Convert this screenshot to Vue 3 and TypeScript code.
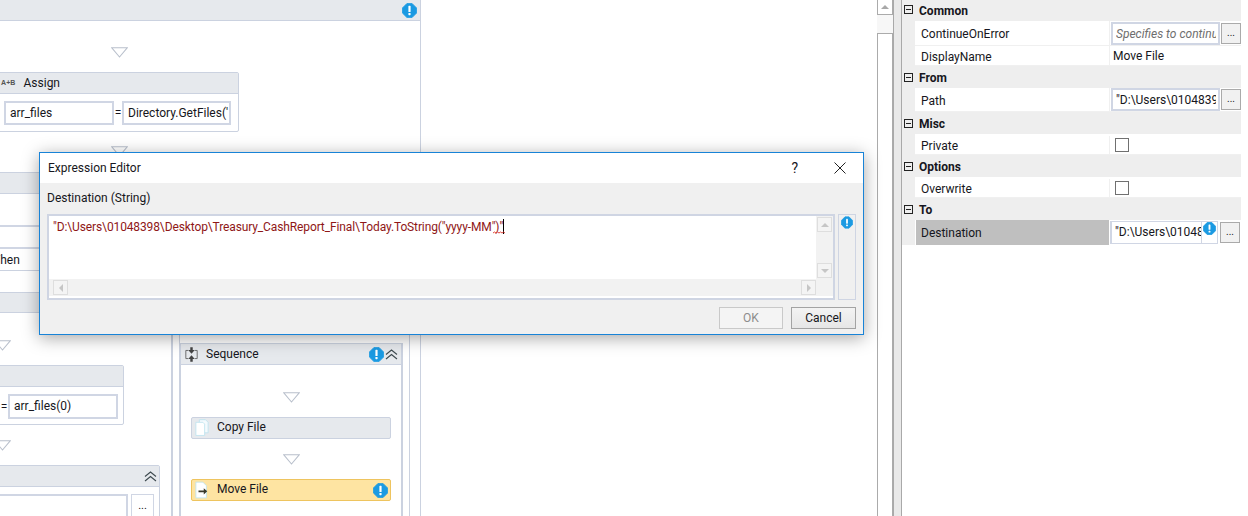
<script setup lang="ts">
interface Row {
  label: string
  h: number
  kind: 'input' | 'text' | 'check' | 'warn'
  value?: string
  placeholder?: boolean
}
interface Group {
  title: string
  h: number
  rows: Row[]
}
const groups: Group[] = [
  {
    title: 'Common',
    h: 21,
    rows: [
      { label: 'ContinueOnError', h: 25, kind: 'input', value: 'Specifies to continu', placeholder: true },
      { label: 'DisplayName', h: 20, kind: 'text', value: 'Move File' }
    ]
  },
  { title: 'From', h: 22, rows: [{ label: 'Path', h: 24, kind: 'input', value: '"D:\\Users\\0104839' }] },
  { title: 'Misc', h: 22, rows: [{ label: 'Private', h: 21, kind: 'check' }] },
  { title: 'Options', h: 22, rows: [{ label: 'Overwrite', h: 21, kind: 'check' }] },
  { title: 'To', h: 22, rows: [{ label: 'Destination', h: 25, kind: 'warn', value: '"D:\\Users\\01048' }] }
]
const expression = '"D:\\Users\\01048398\\Desktop\\Treasury_CashReport_Final\\Today.ToString("yyyy-MM")"'
</script>

<template>
  <div class="app">
    <svg class="defs" width="0" height="0" aria-hidden="true">
      <symbol id="info" viewBox="0 0 15 15">
        <path d="M5 .4h5L14.6 5v5L10 14.600H5L.4 10V5z" fill="#1b9ae2" stroke="#1b9ae2" stroke-width=".8" stroke-linejoin="round" />
        <rect x="6.400" y="2.800" width="2.200" height="6.200" rx=".6" fill="#fff" />
        <rect x="6.400" y="10" width="2.200" height="2.200" rx=".6" fill="#fff" />
      </symbol>
      <symbol id="tri" viewBox="0 0 17 11">
        <path d="M.8.8h15.400L8.500 10z" fill="#fff" stroke="#b9c0cc" stroke-width="1.100" />
      </symbol>
      <symbol id="chev" viewBox="0 0 13 11">
        <path d="M1 5.500 6.500 1 12 5.500M1 10 6.500 5.500 12 10" fill="none" stroke="#3e4a4f" stroke-width="1.100" />
      </symbol>
    </svg>

    <main class="canvas">
      <section class="outer">
        <header class="outer-head">
          <svg class="ic outer-ic"><use href="#info" /></svg>
        </header>
      </section>

      <svg class="tri t1"><use href="#tri" /></svg>
      <article class="card assign">
        <header class="card-head">
          <span class="ab">A+B</span>
          <span>Assign</span>
        </header>
        <div class="assign-body">
          <span class="field f-to">arr_files</span>
          <span class="eq">=</span>
          <span class="field f-val">Directory.GetFiles('</span>
        </div>
      </article>
      <svg class="tri t2"><use href="#tri" /></svg>

      <article class="card hidden-card">
        <header class="card-head"></header>
        <div class="hidden-field"></div>
        <div class="then-row">Then</div>
      </article>
      <div class="band"></div>
      <svg class="tri t3"><use href="#tri" /></svg>

      <article class="card assign2">
        <header class="card-head"></header>
        <div class="assign2-body">
          <span class="eq">=</span>
          <span class="field f-val2">arr_files(0)</span>
        </div>
      </article>
      <svg class="tri t4"><use href="#tri" /></svg>

      <article class="card last">
        <header class="card-head last-head">
          <svg class="chev"><use href="#chev" /></svg>
        </header>
        <div class="last-body">
          <span class="field f-last"></span>
          <span class="dots">...</span>
        </div>
      </article>

      <div class="vline v1"></div>
      <div class="vline v2"></div>
      <div class="vline v3"></div>

      <section class="sequence">
        <header class="seq-head">
          <svg class="seq-ic" viewBox="0 0 16 18">
            <path d="M4 4H1v10h3M12 4h3v10h-3" fill="none" stroke="#555" stroke-width="1" />
            <path d="M6.500 0h3v3.500H12L8 8 4 3.500h2.500zM6.500 18v-3.500H4L8 10l4 4.500H9.500V18z" fill="#444" />
          </svg>
          <span class="seq-title">Sequence</span>
          <svg class="ic"><use href="#info" /></svg>
          <svg class="chev"><use href="#chev" /></svg>
        </header>
        <div class="seq-body">
          <svg class="tri-flow tri-first"><use href="#tri" /></svg>
          <div class="act">
            <svg class="act-ic" viewBox="0 0 16 20">
              <path d="M5 .5h7l3 3v12H5z" fill="#f4fafd" stroke="#bfe3ef" />
              <path d="M1 3.500h8l2 2v13H1z" fill="#fff" stroke="#bfe3ef" />
            </svg>
            <span>Copy File</span>
          </div>
          <svg class="tri-flow tri-next"><use href="#tri" /></svg>
          <div class="act act-sel">
            <svg class="act-ic" viewBox="0 0 16 20">
              <path d="M1 1h8l4 4v14H1z" fill="#fff" stroke="#bfe3ef" />
              <path d="M4 10.500h6V8l4 3.500-4 3.500v-2.500H4z" fill="#3a3a2c" />
            </svg>
            <span class="act-name">Move File</span>
            <svg class="ic"><use href="#info" /></svg>
          </div>
        </div>
      </section>
    </main>

    <aside class="vscroll">
      <div class="sb-up"><i class="arrow-up"></i></div>
      <div class="sb-thumb"></div>
    </aside>
    <div class="splitter"></div>

    <aside class="props">
      <div class="props-list">
        <template v-for="g in groups" :key="g.title">
          <div class="group" :style="{ height: g.h + 'px' }">
            <span class="collapse"></span>
            <b>{{ g.title }}</b>
          </div>
          <div
            v-for="r in g.rows"
            :key="r.label"
            class="row"
            :class="{ 'row-sel': r.kind === 'warn', 'row-check': r.kind === 'check' }"
            :style="{ height: r.h + 'px' }"
          >
            <span class="row-label">{{ r.label }}</span>
            <span class="row-value">
              <template v-if="r.kind === 'input'">
                <span class="p-input" :class="{ ph: r.placeholder }"><span class="clip">{{ r.value }}</span></span>
                <span class="p-btn">...</span>
              </template>
              <span v-else-if="r.kind === 'text'" class="p-text">{{ r.value }}</span>
              <span v-else-if="r.kind === 'check'" class="p-check"></span>
              <template v-else>
                <span class="p-warn">
                  <span class="clip">{{ r.value }}</span>
                  <span class="p-warn-ic"><svg class="ic"><use href="#info" /></svg></span>
                </span>
                <span class="p-btn">...</span>
              </template>
            </span>
          </div>
        </template>
      </div>
    </aside>

    <div class="dialog" role="dialog">
      <header class="dlg-title">
        <span class="dlg-name">Expression Editor</span>
        <span class="dlg-help">?</span>
        <svg class="dlg-x" viewBox="0 0 12 12"><path d="M.5.5l11 11M11.500.5l-11 11" stroke="#222" stroke-width="1" fill="none" /></svg>
      </header>
      <div class="dlg-body">
        <div class="dlg-label">Destination (String)</div>
        <div class="dlg-editor">
          <div class="editor">
            <div class="ed-main">
              <div class="ed-text">
                <span class="code">{{ expression }}</span><i class="caret"></i>
                <svg class="squiggle" viewBox="0 0 12 3"><path d="M0 2 1.500 1 3 2 4.500 1 6 2 7.500 1 9 2 10.500 1 12 2" fill="none" stroke="#e0362c" stroke-width=".9" /></svg>
              </div>
              <div class="ed-vs">
                <span class="sb-btn"><i class="g-up"></i></span>
                <span class="sb-btn"><i class="g-down"></i></span>
              </div>
            </div>
            <div class="ed-hs">
              <span class="sb-btn"><i class="g-left"></i></span>
              <span class="sb-btn"><i class="g-right"></i></span>
            </div>
          </div>
          <div class="ed-side"><svg class="ic"><use href="#info" /></svg></div>
        </div>
        <footer class="dlg-foot">
          <span class="btn btn-off">OK</span>
          <span class="btn btn-on">Cancel</span>
        </footer>
      </div>
    </div>
  </div>
</template>

<style>
html, body { margin: 0; background: #fff; }
</style>

<style scoped>
.app {
  position: relative;
  display: flex;
  width: 1248px;
  height: 516px;
  overflow: hidden;
  background: #fff;
  color: #161620;
  font: 12px/16px Roboto, "Noto Sans", sans-serif;
}
.defs { position: absolute; }
.ic { width: 15px; height: 15px; flex: none; display: block; }

/* designer canvas */
.canvas { position: relative; width: 877px; flex: none; overflow: hidden; }
.outer {
  position: absolute; left: -2px; top: -1px; width: 422px; height: 530px;
  border: 1px solid #cbd2e0; border-width: 0 1px 0 0;
}
.outer-head {
  height: 20px; background: #e6e9ed; border-bottom: 1px solid #cbd2e0;
  display: flex; justify-content: flex-end; align-items: center; padding-right: 3px; box-sizing: content-box; padding-top: 1px;
}
.tri { position: absolute; width: 17px; height: 11px; }
.t1 { left: 111px; top: 47px; }
.t2 { left: 111px; top: 146px; }
.t3 { left: -6px; top: 340px; }
.t4 { left: -6px; top: 440px; }
.card {
  position: absolute; box-sizing: border-box; border: 1px solid #cbd2e0; border-radius: 2px; background: #fff;
}
.card-head {
  box-sizing: border-box; height: 21px; background: #e6e9ed; border-bottom: 1px solid #cbd2e0;
  display: flex; align-items: center;
}
.assign { left: -10px; top: 72px; width: 249px; height: 60px; }
.assign .card-head { padding-left: 10px; gap: 8px; }
.ab { font: 700 7px/10px "Liberation Sans", sans-serif; color: #555; letter-spacing: .1px; }
.assign-body { display: flex; align-items: center; padding: 7px 0 0 13px; }
.field {
  box-sizing: border-box; display: block; height: 24px; border: 2px solid #d0d6e4; background: #fff;
  padding: 2px 0 0 4px; overflow: hidden; white-space: nowrap;
}
.f-to { width: 110px; }
.f-val { width: 109px; }
.eq { width: 8px; text-align: center; }
.hidden-card { left: -20px; top: 172px; width: 200px; height: 99px; }
.hidden-field { border-bottom: 2px solid #d0d6e4; box-sizing: border-box; height: 33px; }
.then-row {
  box-sizing: border-box; height: 24px; border-top: 2px solid #d0d6e4; margin-top: 20px; padding: 3px 0 0 12px;
}
.band { position: absolute; left: -20px; top: 292px; width: 200px; height: 21px; background: #e6e9ed; border: 1px solid #cbd2e0; box-sizing: border-box; }
.assign2 { left: -20px; top: 365px; width: 144px; height: 60px; }
.assign2-body { display: flex; align-items: center; padding: 7px 0 0 19px; }
.f-val2 { width: 110px; height: 25px; }
.last { left: -20px; top: 465px; width: 180px; height: 70px; }
.last-head { justify-content: flex-end; padding-right: 2px; }
.last-body { display: flex; gap: 3px; padding: 7px 0 0 0; }
.f-last { width: 147px; height: 30px; }
.dots {
  width: 23px; height: 30px; box-sizing: border-box; border: 1px solid #d0d6e4; text-align: center; line-height: 22px; font-size: 11px;
}
.chev { width: 13px; height: 11px; display: block; flex: none; }

.vline { position: absolute; top: 300px; bottom: 0; background: #cbd2e0; width: 1px; }
.v1 { left: 171px; width: 2px; }
.v2 { left: 179px; }
.v3 { left: 409px; }

.sequence {
  position: absolute; left: 180px; top: 343px; width: 223px; height: 190px; box-sizing: border-box;
  border: 1px solid #cbd2e0; border-width: 1px 2px 0 1px; background: #fff;
}
.seq-head {
  box-sizing: border-box; height: 21px; background: #e6e9ed; border-bottom: 1px solid #cbd2e0;
  display: flex; align-items: center; padding: 0 3px 0 4px;
}
.seq-ic { width: 13px; height: 15px; flex: none; }
.seq-title { flex: 1; margin-left: 8px; }
.seq-head .ic { margin-right: 1px; }
.seq-body { display: flex; flex-direction: column; align-items: center; }
.tri-flow { width: 17px; height: 11px; display: block; flex: none; }
.tri-first { margin-top: 27px; margin-bottom: 14px; }
.tri-next { margin-top: 15px; margin-bottom: 14px; }
.act {
  box-sizing: border-box; width: 200px; height: 22px; background: #e6e9ed; border: 1px solid #cbd2e0; border-radius: 2px;
  display: flex; align-items: center; padding: 0 2px 0 3px;
}
.act-ic { width: 14px; height: 18px; flex: none; margin-right: 8px; }
.act span { line-height: 18px; position: relative; top: -1px; }
.act-sel { background: #fee4a2; border-color: #eec45f; }
.act-name { flex: 1; }

/* scrollbar + splitter */
.vscroll { width: 16px; flex: none; background: #f7f7f7; box-sizing: border-box; position: relative; }
.sb-up {
  box-sizing: border-box; height: 15px; background: #fff; border: 1px solid #ababab; border-top: 0;
  display: flex; align-items: center; justify-content: center;
}
.arrow-up { width: 0; height: 0; border: 4px solid transparent; border-top: 0; border-bottom: 4px solid #a8a8a8; }
.sb-thumb { position: absolute; left: 0; right: 0; top: 33px; bottom: -2px; border: 1px solid #ababab; background: #fff; }
.splitter { width: 9px; flex: none; box-sizing: border-box; background: #e9e9e9; border-left: 1px solid #a9a9a9; border-right: 1px solid #a9a9a9; }

/* properties */
.props { flex: 1; min-width: 0; display: flex; align-items: flex-start; padding-right: 7px; }
.props-list { width: 100%; background: #eee; }
.group { display: flex; align-items: center; padding: 2px 0 0 2px; box-sizing: border-box; }
.group:first-child { padding-top: 0; }
.group b { font-weight: 700; margin-left: 6px; }
.collapse {
  width: 9px; height: 9px; box-sizing: border-box; border: 1px solid #222; position: relative; top: -1px; flex: none;
}
.collapse::after { content: ""; position: absolute; left: 1px; right: 1px; top: 3px; height: 1px; background: #222; }
.row {
  display: flex; box-sizing: border-box; margin-left: 13px; background: #fff; border-bottom: 1px solid #f0f0f0;
}
.row-check { padding-top: 2px; }
.row-label { width: 194px; flex: none; padding-left: 6px; box-sizing: border-box; align-self: center; position: relative; top: 1px; }
.row-value { flex: 1; min-width: 0; display: flex; align-items: center; padding-left: 1px; border-left: 1px solid #f0f0f0; }
.row-sel { border-bottom: 0; background: #fff; }
.row-sel .row-label { align-self: stretch; background: #bfbfbf; display: flex; align-items: center; margin-left: 1px; width: 193px; padding-left: 5px; top: 0; }
.row-sel .row-value { border-left: 0; }
.p-input {
  box-sizing: border-box; width: 109px; height: 23px; border: 2px solid #d0d6e4; display: block; padding: 2px 2px 0 3px;
}
.clip { display: block; overflow: hidden; white-space: nowrap; }
.ph { font-style: italic; color: #6e6e6e; }
.p-btn {
  box-sizing: border-box; width: 20px; height: 21px; margin-left: 1px; background: #f1f1f1; border: 1px solid #aaa;
  text-align: center; font-size: 10px; line-height: 17px; flex: none;
}
.p-text { padding-left: 2px; }
.p-check { width: 14px; height: 14px; box-sizing: border-box; border: 1px solid #707070; background: #fff; margin-left: 4px; }
.p-warn {
  box-sizing: border-box; width: 108px; height: 23px; border: 1px solid #d0d6e4; border-left-width: 2px; display: flex;
}
.p-warn .clip { width: 89px; padding: 2px 0 0 3px; box-sizing: border-box; flex: none; }
.p-warn-ic { flex: 1; border-left: 1px solid #d0d6e4; display: flex; justify-content: center; }
.p-warn-ic .ic { width: 13px; height: 13px; }
.row-sel .p-btn { margin-left: 2px; }

/* dialog */
.dialog {
  position: absolute; left: 39px; top: 152px; width: 825px; height: 183px; box-sizing: border-box;
  border: 1px solid #1883d7; background: #f0f0f0; box-shadow: 0 3px 16px rgba(0, 0, 0, .35);
  display: flex; flex-direction: column;
}
.dlg-title { height: 30px; flex: none; background: #fff; display: flex; align-items: center; padding: 0 17px 0 8px; }
.dlg-name { flex: 1; }
.dlg-help { margin-right: 36px; font-size: 14px; }
.dlg-x { width: 12px; height: 12px; }
.dlg-body { flex: 1; padding: 7px 7px 0 7px; display: flex; flex-direction: column; }
.dlg-label { height: 24px; line-height: 16px; }
.dlg-editor { display: flex; height: 86px; gap: 3px; flex: none; }
.editor {
  box-sizing: border-box; width: 788px; border: 2px solid #cfd5e3; background: #fff; display: flex; flex-direction: column;
  padding-bottom: 2px;
}
.ed-main { flex: 1; display: flex; min-height: 0; }
.ed-text { flex: 1; position: relative; padding: 3px 0 0 4px; white-space: nowrap; }
.code { color: #8f1717; letter-spacing: -.12px; }
.caret { display: inline-block; width: 1px; height: 15px; background: #000; vertical-align: -3px; }
.squiggle { position: absolute; left: 444px; top: 15px; width: 12px; height: 3px; }
.ed-vs { width: 17px; flex: none; background: #f2f2f2; display: flex; flex-direction: column; justify-content: space-between; padding: 1px; box-sizing: border-box; }
.ed-hs { height: 17px; flex: none; background: #f2f2f2; display: flex; justify-content: space-between; padding: 1px 17px 1px 4px; box-sizing: border-box; }
.sb-btn {
  box-sizing: border-box; width: 15px; height: 15px; border: 1px solid #dedede; background: #f4f4f4; display: flex; align-items: center; justify-content: center; flex: none;
}
.g-up, .g-down, .g-left, .g-right { width: 0; height: 0; border: 4px solid transparent; }
.g-up { border-top: 0; border-bottom-color: #c6c6c6; }
.g-down { border-bottom: 0; border-top-color: #c6c6c6; }
.g-left { border-left: 0; border-right-color: #c6c6c6; }
.g-right { border-right: 0; border-left-color: #c6c6c6; }
.ed-side { width: 18px; box-sizing: border-box; border: 1px solid #cfd5e3; flex: none; display: flex; justify-content: center; padding-top: 1px; }
.ed-side .ic { width: 12px; height: 13px; }
.dlg-foot { display: flex; justify-content: flex-end; gap: 8px; margin-top: 7px; }
.btn { box-sizing: border-box; height: 22px; text-align: center; line-height: 20px; }
.btn-off { width: 64px; background: #f4f4f4; border: 1px solid #c9c9c9; color: #8d8d8d; }
.btn-on { width: 65px; border: 1px solid #a3a3a3; background: linear-gradient(#f3f3f3, #e6e6e6); }
</style>
